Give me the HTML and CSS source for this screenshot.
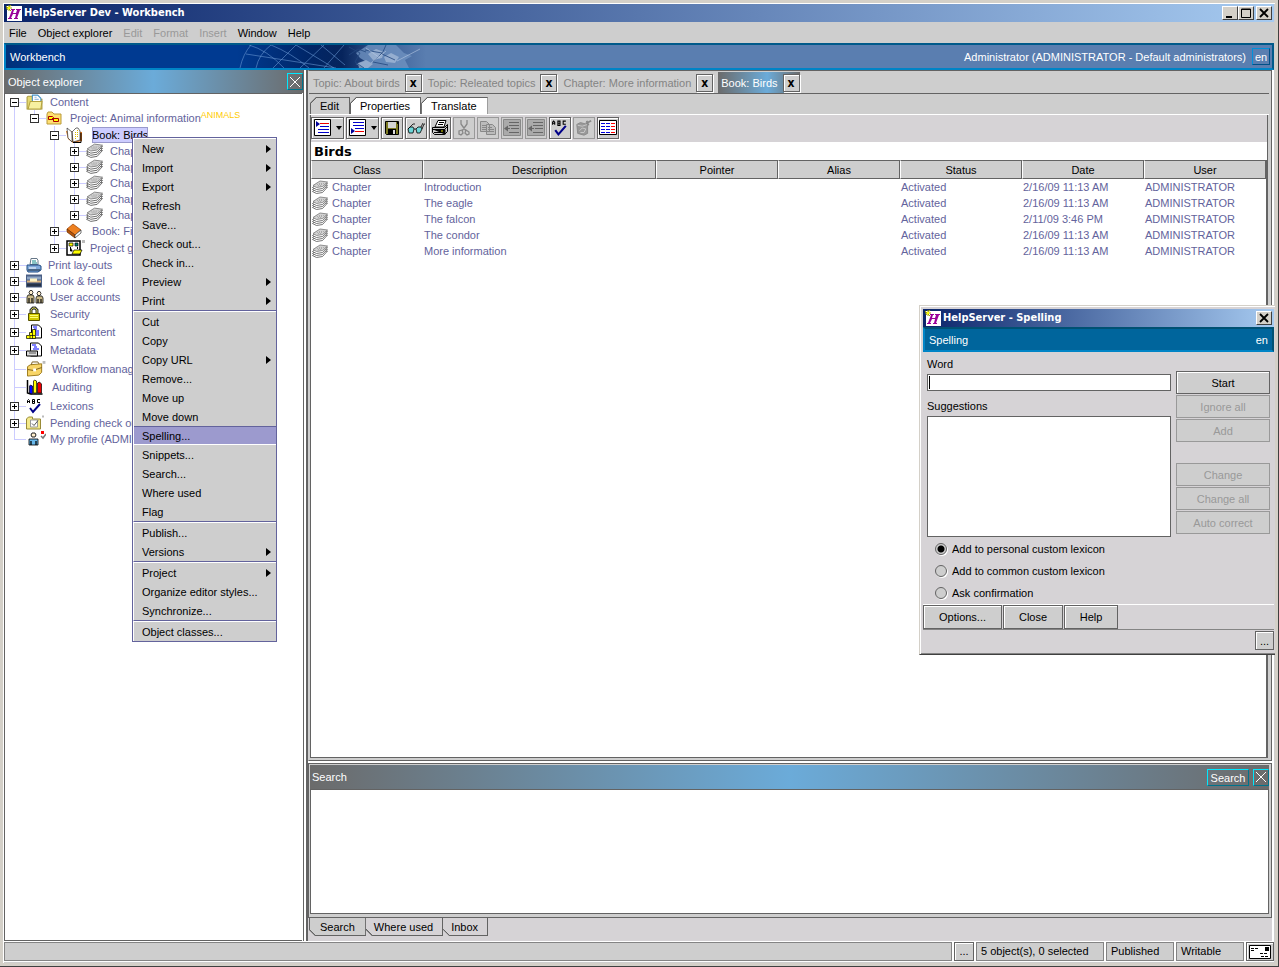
FILE: index.html
```html
<!DOCTYPE html>
<html lang="en">
<head>
<meta charset="utf-8">
<title>HelpServer Dev - Workbench</title>
<link rel="stylesheet" href="styles.css">
</head>
<body>
<svg class="sprite" aria-hidden="true">
  <symbol id="logo" viewBox="0 0 16 16"><path fill="#fff" d="M1 1h15v15H1z"/><path fill="#909" d="M5 4h4v1H8L7 8h3l1-3h-1V4h5v1h-1l-3 8h1v1H8v-1h1l1-4H7l-2 4h1v1H2v-1h1l3-8H5z"/><path stroke="#aa0" d="M0 1l5 5M5 0L1 5M3 0v6M0 3h6"/><path fill="#ff0" d="M2 2h2v2H2z"/></symbol>
  <symbol id="chapter" viewBox="0 0 16 14"><g stroke="#555" stroke-width=".8" fill="#fff"><path d="M.5 11.500l5-4 10-.5-5 5.500-6 1z"/><path d="M.5 9.500l5-4 10-.5-5 5.500-6 1z"/><path d="M.5 7.500l5-4 10-.5-5 5.500-6 1z"/></g><path fill="#d2d2d2" stroke="#777" stroke-width=".8" d="M1 5.500L8 1l7.500 1-5 4.500-6 1z"/><path stroke="#aaa" stroke-dasharray="1 1" d="M5 4.500h6M7 3.500h6M6 5.500h4"/></symbol>
  <symbol id="content" viewBox="0 0 16 15"><path fill="#e4d870" stroke="#aa9b42" d="M1 14V3l1-1h4v3h9v9z"/><path fill="#fff" stroke="#4793c5" d="M6 1h5l3 3v5H6z"/><path stroke="#9bd" d="M8 3h2M8 5h4"/><path fill="#f7f0a0" stroke="#b6a340" d="M2 14l2-7h11l-1 7z"/></symbol>
  <symbol id="project" viewBox="0 0 16 14"><path fill="#ffdf72" stroke="#b99a3a" d="M1 13V3l1-2h4l2 2h7v10z"/><path fill="#ff0" stroke="#a00" d="M2.500 5.500h4l1 1v2h-5zM8.500 7.500h4v3h-5v-3zM6 7.500h3"/></symbol>
  <symbol id="openbook" viewBox="0 0 16 16"><path fill="#d6721d" d="M0 4l2 8 5 4 9-2V5z"/><path fill="#fff" stroke="#333" stroke-width=".7" d="M1 1l5 4v10l-4-4zM6 5l4-4h2l2 3v9l-7 2z"/><path stroke="#db0" stroke-dasharray="1 1" d="M9.500 5v7M11.500 3v8"/><path stroke="#000" fill="none" d="M7 15.500h8V6"/></symbol>
  <symbol id="closedbook" viewBox="0 0 16 16"><path fill="#ee8020" stroke="#963e00" stroke-width=".7" d="M1 6l6-5 8 6-6 5z"/><path fill="#b95509" stroke="#622a00" stroke-width=".7" d="M1 6l8 6v3L1 9z"/><path fill="#fff" stroke="#333" stroke-width=".7" d="M9 12l6-5v3l-6 5z"/></symbol>
  <symbol id="group" viewBox="0 0 19 16"><path fill="#fff" stroke="#000" stroke-width="1.500" d="M1 1h13v14H1z"/><path fill="#ff0" stroke="#000" stroke-width=".7" d="M3 3h4v3H3zM6 14l2-4h8l-2 4z"/><path fill="#087" stroke="#000" stroke-width=".7" d="M9 3h3v3H9z"/><path stroke="#000" d="M4.500 7v4h2M11.500 7v2"/><path fill="#bbb" d="M16 0h3v3h-3z"/></symbol>
  <symbol id="printer" viewBox="0 0 16 15"><path fill="#fff" stroke="#678" d="M4 7l1-6h6l1 2v4z"/><path stroke="#188" d="M6 3.500h4M6 5.500h5"/><path fill="#80a9db" stroke="#214c83" d="M1 7.500h12l2 1v4l-3 2H2l-1-2z"/><path stroke="#123" d="M2 12.500h12"/><path stroke="#fff" d="M3 10.500h7"/></symbol>
  <symbol id="look" viewBox="0 0 16 13"><path fill="#4a5f85" d="M0 0h16v13H0z"/><path fill="#8fa6c4" d="M1 2h14v3H1z"/><path fill="#ddb27b" d="M1 6h14v2H1z"/><path fill="#fff4c5" d="M4 4h7v3H4z"/><path fill="#263246" d="M1 9h14v3H1z"/></symbol>
  <symbol id="users" viewBox="0 0 18 14"><g stroke="#111" stroke-width=".8"><path fill="#fec" d="M4 .5h2l1 2-1 2H4l-1-2zM12 1.500h2l1 2-1 2h-2l-1-2z"/><path fill="#cb8" d="M1 7l1-2h5l1 2v6H6V8v5H3V8v5H1zM10 8l1-2h5l1 2v5h-2V9v4h-3V9v4h-2z"/></g></symbol>
  <symbol id="lock" viewBox="0 0 16 16"><path fill="none" stroke="#333" stroke-width="3" d="M5 8V4l2-2h2l2 2v4"/><path fill="none" stroke="#cc4" d="M5 8V4l2-2h2l2 2v4"/><path fill="#d1c800" stroke="#555000" d="M2.500 7.500h11v7h-11z"/><path stroke="#ffff74" d="M4 9.500h8M4 11.500h8"/></symbol>
  <symbol id="smart" viewBox="0 0 16 15"><path fill="#fff" stroke="#000" d="M5.500.5h7l3 3v10h-10z"/><path stroke="#00f" d="M7 2.500h4M8 4.500h3M9 6.500h4M10 8.500h3M10 10.500h3"/><path fill="#ff0" stroke="#000" stroke-width=".7" d="M.5 11h3V8h3V5h3v9h-9zM4 11v3M6.500 8v6M4 11h5"/></symbol>
  <symbol id="meta" viewBox="0 0 16 15"><path fill="#fff" stroke="#000" d="M4.500 8V.5h8l3 3v10h-11z"/><path stroke="#00f" d="M6 2.500h4M8 4.500h3M7 6.500h6"/><path fill="#ddd" stroke="#000" d="M.5 8.500h11v5H.5z"/><path stroke="#555" d="M3 10.500h7"/></symbol>
  <symbol id="workflow" viewBox="0 0 20 17"><path fill="#f8d568" stroke="#9a7615" d="M1 6l3-2 12-1v9l-3 3-12 1z"/><path fill="none" stroke="#765a18" d="M5 4l1-3h6l1 2M1 9l6 1 9-3"/><path fill="#fff" d="M7 8h3v3H7z"/><path fill="#bbb" d="M17 0h3v3h-3z"/></symbol>
  <symbol id="audit" viewBox="0 0 16 16"><path fill="none" stroke="#000" stroke-width="1.500" d="M1 1v13l3 1h12"/><path fill="#00f" stroke="#000" stroke-width=".7" d="M3 7l1-1 2 1v7l-1 1-2-1z"/><path fill="#ff0" stroke="#000" stroke-width=".7" d="M7 2l1-1 2 1v12H7z"/><path fill="#e00" stroke="#000" stroke-width=".7" d="M11 4l2-1 2 2v9h-4z"/></symbol>
  <symbol id="spell" viewBox="0 0 17 16"><path fill="none" stroke="#000" d="M1.500 5V2.500l1-1 1 1V5M1 3.500h2M6.500 5V1.500h2v4h-2zM6 3.500h2M14 1.500h-2.500v3H14"/><path fill="none" stroke="#008" stroke-width="2" d="M4 10l3 4 7-8"/></symbol>
  <symbol id="pending" viewBox="0 0 18 15"><path fill="#f4e98a" stroke="#998b37" d="M.5 13.500v-10l2-2h4v2h8v10z"/><path fill="#fff" stroke="#999" d="M4.500 4.500h7v7h-7z"/><path fill="none" stroke="#555" d="M6 8l2 2 4-5"/><path fill="#bbb" d="M16 0h2v2h-2z"/></symbol>
  <symbol id="profile" viewBox="0 0 20 15"><path fill="#fec" stroke="#222" d="M6 2h3l1 2-1 2H6L5 4z"/><path fill="#69b8eb" stroke="#000" stroke-width=".8" d="M3 8h9v6h-2v-4 4H5v-4 4H3z"/><path fill="#f00" d="M15 0h3v3h-3z"/><path fill="none" stroke="#777" stroke-width="1.500" d="M15 5l2 2 3-4"/></symbol>
  <symbol id="insert1" viewBox="0 0 18 18"><path fill="#fff" stroke="#000" d="M.5.5h16v16H.5z"/><path fill="#009" d="M2 2l4 3-4 3z"/><path stroke="#e00" d="M6 4.500h9"/><path stroke="#00c" d="M6 7.500h9M4 10.500h11M4 13.500h11"/></symbol>
  <symbol id="insert2" viewBox="0 0 18 18"><path fill="#fff" stroke="#000" d="M.5.5h16v16H.5z"/><path fill="#009" d="M2 9l4 3-4 3z"/><path stroke="#e00" d="M6 12.500h9"/><path stroke="#00c" d="M4 3.500h11M4 6.500h11M6 9.500h9"/></symbol>
  <symbol id="save" viewBox="0 0 18 18"><path fill="#7c7a23" stroke="#000" d="M2.500 2.500h13v13h-12l-1-1z"/><path fill="#d4d4d4" d="M5 3h8v6H5z"/><path fill="#000" d="M5 10h8v6H5zM14 3h1v2h-1z"/><path fill="#ddd" d="M10 11h2v4h-2z"/></symbol>
  <symbol id="glasses" viewBox="0 0 18 18"><path fill="#6ed7da" stroke="#000" stroke-width=".8" d="M1 10l2-2h3l1 2-1 4H2zM9 10l2-2h3l1 2-2 4h-3z"/><path fill="none" stroke="#000" stroke-width=".8" d="M1 10l5-5h2M7 10h2M15 10l2-5h1M14 8l2-4"/></symbol>
  <symbol id="print" viewBox="0 0 18 18"><path fill="#fff" stroke="#000" d="M4 8l3-6.500h8L13 8z"/><path stroke="#000" d="M8 3.500h5M7 5.500h5"/><path fill="#ccc" stroke="#000" d="M1.500 8.500h12l3-3v7l-3 3h-10l-2-2z"/><path stroke="#000" d="M2 10.500h12v5M3 13.500h10M14 10l3-3"/><path stroke="#dd0" d="M10 12h2"/></symbol>
  <symbol id="cut" viewBox="0 0 18 18"><path fill="none" stroke="#888" stroke-width="1.300" d="M6 1v4l5 7M12 1v4l-5 7M7 11l-3 1v3l2 1 2-2zM11 11l3 2v2l-2 1-2-2z"/></symbol>
  <symbol id="copy" viewBox="0 0 18 18"><g fill="#bbb" stroke="#888"><path d="M1.500 2.500h6l3 3v7h-9zM7.500 5.500h6l3 3v7h-9z"/><path d="M3 6.500h4M3 8.500h4M3 10.500h4M9 8.500h4M9 10.500h6M9 12.500h6"/></g></symbol>
  <symbol id="indent" viewBox="0 0 18 18"><path fill="#aaa" stroke="#888" d="M.5.5h17v16H.5z"/><path stroke="#666" d="M6 3.500h10M6 6.500h10M8 9.500h8M2 9.500h5M6 13.500h10"/><path fill="#666" d="M1 9.500l4-3v6z"/></symbol>
  <symbol id="recycle" viewBox="0 0 20 18"><path fill="#999" stroke="#888" d="M2 5l4-2 8 2v10l-4 2-7-2z"/><path stroke="#ccc" fill="none" d="M3 6l5 1 6-2M5 12l3-3 4 1-2 4H6"/><path fill="none" stroke="#888" stroke-width="2" d="M12 4l6-3M13 1l2 5"/></symbol>
  <symbol id="columns" viewBox="0 0 18 18"><path fill="#fff" stroke="#000" d="M.5 1.500h17v14H.5z"/><path stroke="#00d" stroke-dasharray="4 1" d="M2 4.500h9M2 7.500h9M2 10.500h9M2 13.500h9"/><path stroke="#f00" d="M12 4.500h4M12 7.500h4M12 10.500h4M12 13.500h4"/></symbol>
  <symbol id="mail" viewBox="0 0 22 14"><path fill="#fff" stroke="#000" d="M.5.5h21v13H.5z"/><path fill="#000" d="M16 2h4v4h-4z"/><path stroke="#000" stroke-dasharray="3 1" d="M2 3.500h7M2 5.500h4M11 8.500h8M12 11.500h8"/></symbol>
  <symbol id="close" viewBox="0 0 10 10"><path stroke="currentColor" d="M0 0l10 10M10 0L0 10"/></symbol>
  <symbol id="heavyclose" viewBox="0 0 10 10"><path stroke="currentColor" stroke-width="1.800" d="M1 1l8 8M9 1L1 9"/></symbol>
</svg>

<header class="titlebar">
  <svg class="i16"><use href="#logo"/></svg><h1>HelpServer Dev - Workbench</h1>
  <div class="winbtns"><button aria-label="Minimize"><svg class="i10"><path d="M1 8h6v2H1z"/></svg></button><button aria-label="Maximize"><svg class="i10"><path fill="none" stroke="#000" d="M.5 1h9v8.500h-9zM1 1.500h9"/></svg></button><button class="apart" aria-label="Close window"><svg class="i10"><use href="#heavyclose"/></svg></button></div>
</header>
<nav class="menubar"><button>File</button><button>Object explorer</button><button disabled>Edit</button><button disabled>Format</button><button disabled>Insert</button><button>Window</button><button>Help</button></nav>
<div class="banner">
  <svg class="art" viewBox="0 0 420 23" preserveAspectRatio="none" aria-hidden="true">
    <defs><linearGradient id="sea"><stop offset="0" stop-color="#003079"/><stop offset=".1" stop-color="#003a91"/><stop offset=".55" stop-color="#003a91"/><stop offset=".72" stop-color="#002668"/><stop offset=".8" stop-color="#06245c"/><stop offset=".9" stop-color="#3b5e96"/><stop offset="1" stop-color="#5a7eb0"/></linearGradient></defs>
    <path fill="url(#sea)" d="M0 0h420v23H0z"/>
    <path fill="none" stroke="#6694d0" opacity=".6" d="M234 23q3-14 11-23M250 23q3-14 15-23M267 23l23-23M294 23l24-23M318 23l20-23M243 0q18 5 35 23M265 0q20 8 38 23M290 0l38 23M315 0l24 20M240 9l90 14"/>
    <path fill="#6f92c0" opacity=".8" d="M350 8l12-8h28l8 8 8 3-7 4 4 8h-45l-8-4 9-3-5-3z"/>
    <path fill="#b4c7e0" opacity=".6" d="M362 9l8-5 8 3-2 6-9 2zM378 12l7-4 8 4-4 6-9-1zM352 18l8-3 7 4-5 4h-9z"/>
    <path fill="none" stroke="#23477e" opacity=".8" d="M343 2l11 6-5 9 9 6M359 5l17 3-9 9 15 3M380 0l-4 9 13 6M343 10l9-6 8 3"/>
    <path stroke="#b7cae4" opacity=".6" d="M360 3l14 10M365 18l15-12M391 16l23-12"/>
  </svg>
  <span class="name">Workbench</span><span>Administrator (ADMINISTRATOR - Default administrators)</span><button class="lang">en</button>
</div>

<main class="work">
  <section class="explorer">
    <header class="panehead"><h2>Object explorer</h2><button class="cyan" aria-label="Close explorer"><svg class="i10"><use href="#close"/></svg></button></header>
    <ul class="tree">
      <li class="r16"><button class="ex minus first" aria-label="Collapse"></button><svg class="w24"><use href="#content" width="17" height="16"/></svg><a href="#">Content</a></li>
      <li class="r16"><i></i><button class="ex minus last" aria-label="Collapse"></button><svg class="w24"><use href="#project" width="16" height="16"/></svg><a href="#">Project: Animal information</a><sup>ANIMALS</sup></li>
      <li class="r17"><i></i><b></b><button class="ex minus" aria-label="Collapse"></button><svg class="w26"><use href="#openbook" width="16" height="16"/></svg><a href="#" class="sel">Book: Birds</a></li>
      <li class="r16"><i></i><b></b><i></i><button class="ex" aria-label="Expand"></button><svg class="w24"><use href="#chapter" width="17" height="15"/></svg><a href="#">Chapter</a></li>
      <li class="r16"><i></i><b></b><i></i><button class="ex" aria-label="Expand"></button><svg class="w24"><use href="#chapter" width="17" height="15"/></svg><a href="#">Chapter</a></li>
      <li class="r16"><i></i><b></b><i></i><button class="ex" aria-label="Expand"></button><svg class="w24"><use href="#chapter" width="17" height="15"/></svg><a href="#">Chapter</a></li>
      <li class="r16"><i></i><b></b><i></i><button class="ex" aria-label="Expand"></button><svg class="w24"><use href="#chapter" width="17" height="15"/></svg><a href="#">Chapter</a></li>
      <li class="r16"><i></i><b></b><i></i><button class="ex last" aria-label="Expand"></button><svg class="w24"><use href="#chapter" width="17" height="15"/></svg><a href="#">Chapter</a></li>
      <li class="r16"><i></i><b></b><button class="ex" aria-label="Expand"></button><svg class="w26"><use href="#closedbook" width="16" height="16"/></svg><a href="#">Book: Fish</a></li>
      <li class="r17"><i></i><b></b><button class="ex last" aria-label="Expand"></button><svg class="w24"><use href="#group" width="19" height="16"/></svg><a href="#">Project group</a></li>
      <li class="r17"><button class="ex" aria-label="Expand"></button><svg class="w22"><use href="#printer" width="16" height="16"/></svg><a href="#">Print lay-outs</a></li>
      <li class="r16"><button class="ex" aria-label="Expand"></button><svg class="w24"><use href="#look" width="16" height="16"/></svg><a href="#">Look &amp; feel</a></li>
      <li class="r16"><button class="ex" aria-label="Expand"></button><svg class="w24"><use href="#users" width="18" height="16"/></svg><a href="#">User accounts</a></li>
      <li class="r18"><button class="ex" aria-label="Expand"></button><svg class="w24"><use href="#lock" width="16" height="16"/></svg><a href="#">Security</a></li>
      <li class="r18"><button class="ex" aria-label="Expand"></button><svg class="w24"><use href="#smart" width="16" height="16"/></svg><a href="#">Smartcontent</a></li>
      <li class="r18"><button class="ex" aria-label="Expand"></button><svg class="w24"><use href="#meta" width="16" height="16"/></svg><a href="#">Metadata</a></li>
      <li class="r19"><span class="leaf"></span><svg class="w26"><use href="#workflow" width="20" height="16"/></svg><a href="#">Workflow management</a></li>
      <li class="r18"><span class="leaf"></span><svg class="w26"><use href="#audit" width="17" height="16"/></svg><a href="#">Auditing</a></li>
      <li class="r19"><button class="ex" aria-label="Expand"></button><svg class="w24"><use href="#spell" width="17" height="16"/></svg><a href="#">Lexicons</a></li>
      <li class="r16"><button class="ex" aria-label="Expand"></button><svg class="w24"><use href="#pending" width="18" height="16"/></svg><a href="#">Pending check outs</a></li>
      <li class="r16"><span class="leaf last"></span><svg class="w24"><use href="#profile" width="20" height="15"/></svg><a href="#">My profile (ADMINISTRATOR)</a></li>
    </ul>
  </section>

  <div class="right">
    <section class="editor">
      <div class="doctabs">
        <span class="doc"><a href="#">Topic: About birds</a><button aria-label="Close tab">x</button></span>
        <span class="doc"><a href="#">Topic: Releated topics</a><button aria-label="Close tab">x</button></span>
        <span class="doc"><a href="#">Chapter: More information</a><button aria-label="Close tab">x</button></span>
        <span class="doc active"><a href="#">Book: Birds</a><button aria-label="Close tab">x</button></span>
      </div>
      <div class="subtabs"><button class="on">Edit</button><button>Properties</button><button>Translate</button></div>
      <div class="page">
        <div class="toolbar">
          <button class="drop" aria-label="Insert before"><svg class="i18"><use href="#insert1"/></svg></button>
          <button class="drop" aria-label="Insert after"><svg class="i18"><use href="#insert2"/></svg></button>
          <button aria-label="Save"><svg class="i18"><use href="#save"/></svg></button>
          <button aria-label="Preview"><svg class="i18"><use href="#glasses"/></svg></button>
          <button aria-label="Print"><svg class="i18"><use href="#print"/></svg></button>
          <button disabled aria-label="Cut"><svg class="i18"><use href="#cut"/></svg></button>
          <button disabled aria-label="Copy"><svg class="i18"><use href="#copy"/></svg></button>
          <button disabled aria-label="Move up"><svg class="i18"><use href="#indent"/></svg></button>
          <button disabled aria-label="Move down"><svg class="i18"><use href="#indent"/></svg></button>
          <button aria-label="Spelling"><svg class="i18"><use href="#spell"/></svg></button>
          <button disabled aria-label="Remove"><svg class="i18"><use href="#recycle"/></svg></button>
          <button aria-label="Columns"><svg class="i18"><use href="#columns"/></svg></button>
        </div>
        <h2 class="doctitle">Birds</h2>
        <div class="tablewrap">
        <table>
          <colgroup><col class="c1"><col><col class="c3"><col class="c3"><col class="c3"><col class="c3"><col class="c3"></colgroup>
          <thead><tr><th>Class</th><th>Description</th><th>Pointer</th><th>Alias</th><th>Status</th><th>Date</th><th>User</th></tr></thead>
          <tbody>
            <tr><td class="cls"><svg class="i16"><use href="#chapter"/></svg>Chapter</td><td>Introduction</td><td></td><td></td><td>Activated</td><td>2/16/09 11:13 AM</td><td>ADMINISTRATOR</td></tr>
            <tr><td class="cls"><svg class="i16"><use href="#chapter"/></svg>Chapter</td><td>The eagle</td><td></td><td></td><td>Activated</td><td>2/16/09 11:13 AM</td><td>ADMINISTRATOR</td></tr>
            <tr><td class="cls"><svg class="i16"><use href="#chapter"/></svg>Chapter</td><td>The falcon</td><td></td><td></td><td>Activated</td><td>2/11/09 3:46 PM</td><td>ADMINISTRATOR</td></tr>
            <tr><td class="cls"><svg class="i16"><use href="#chapter"/></svg>Chapter</td><td>The condor</td><td></td><td></td><td>Activated</td><td>2/16/09 11:13 AM</td><td>ADMINISTRATOR</td></tr>
            <tr><td class="cls"><svg class="i16"><use href="#chapter"/></svg>Chapter</td><td>More information</td><td></td><td></td><td>Activated</td><td>2/16/09 11:13 AM</td><td>ADMINISTRATOR</td></tr>
          </tbody>
        </table>
        </div>
      </div>
    </section>
    <section class="searchpane">
      <div class="searchbox">
        <header class="panehead"><h2>Search</h2><button class="cyan text">Search</button><button class="cyan" aria-label="Close search"><svg class="i10"><use href="#close"/></svg></button></header>
        <div class="results"></div>
      </div>
      <div class="bottabs"><button class="on">Search</button><button>Where used</button><button>Inbox</button></div>
    </section>
  </div>
</main>

<footer class="status"><span class="fill"></span><button>...</button><span class="s1">5 object(s), 0 selected</span><span class="s2">Published</span><span class="s2">Writable</span><button class="mailbtn" aria-label="Messages"><svg class="i22"><use href="#mail"/></svg></button></footer>

<div class="context" role="menu">
  <div class="grp"><button class="sub">New</button><button class="sub">Import</button><button class="sub">Export</button><button>Refresh</button><button>Save...</button><button>Check out...</button><button>Check in...</button><button class="sub">Preview</button><button class="sub">Print</button></div>
  <div class="grp"><button>Cut</button><button>Copy</button><button class="sub">Copy URL</button><button>Remove...</button><button>Move up</button><button>Move down</button><button class="hot">Spelling...</button><button>Snippets...</button><button>Search...</button><button>Where used</button><button>Flag</button></div>
  <div class="grp"><button>Publish...</button><button class="sub">Versions</button></div>
  <div class="grp"><button class="sub">Project</button><button>Organize editor styles...</button><button>Synchronize...</button></div>
  <div class="grp"><button>Object classes...</button></div>
</div>

<div class="dialog" role="dialog" aria-labelledby="dlg">
  <header class="titlebar"><svg class="i16"><use href="#logo"/></svg><h2 id="dlg">HelpServer - Spelling</h2><div class="winbtns"><button aria-label="Close dialog"><svg class="i10"><use href="#heavyclose"/></svg></button></div></header>
  <div class="subbanner"><span>Spelling</span><span>en</span></div>
  <div class="form">
    <div class="fields">
      <label for="word">Word</label><input id="word" type="text" class="word">
      <label for="sugg">Suggestions</label><select id="sugg" size="5"></select>
    </div>
    <div class="actions"><button>Start</button><button disabled>Ignore all</button><button disabled>Add</button><button class="gap" disabled>Change</button><button disabled>Change all</button><button disabled>Auto correct</button></div>
  </div>
  <div class="radios"><label><input type="radio" name="lex" checked>Add to personal custom lexicon</label><label><input type="radio" name="lex">Add to common custom lexicon</label><label><input type="radio" name="lex">Ask confirmation</label></div>
  <div class="dlgbtns"><button class="opt">Options...</button><button class="cl">Close</button><button>Help</button></div>
  <div class="dlgstatus"><button>...</button></div>
</div>
</body>
</html>
```
FILE: styles.css
```css
*, *::before, *::after { box-sizing: border-box; }
html { height: 100%; }
body { margin: 0; min-height: 100%; display: flex; flex-direction: column; background: #cecece; border: 3px solid #d4d0c8; box-shadow: inset 1px 1px #fff; padding: 1px; font: 11px/16px "Liberation Sans", Arial, sans-serif; color: #000; position: relative; }
html { border-right: 1px solid #404040; border-bottom: 1px solid #404040; }
button, input, select { font: inherit; color: inherit; margin: 0; padding: 0; border-radius: 0; }
button { border: 0; background: none; white-space: nowrap; }
h1, h2, ul { margin: 0; padding: 0; font-size: inherit; font-weight: inherit; }
a { color: inherit; text-decoration: none; }
svg { flex: none; display: block; }
.sprite { position: absolute; width: 0; height: 0; }
.i10 { width: 10px; height: 10px; }
.i16 { width: 16px; height: 16px; }
.i18 { width: 18px; height: 18px; }
.i22 { width: 22px; height: 14px; }

.titlebar { display: flex; align-items: center; height: 18px; padding: 0 2px; background: linear-gradient(90deg, #0a246a, #a6caf0); color: #fff; font: bold 11px/18px "DejaVu Sans Condensed", "DejaVu Sans", sans-serif; }
.titlebar h1, .titlebar h2 { flex: 1; padding-left: 2px; }
.winbtns { display: flex; }
.winbtns button { width: 16px; height: 14px; display: grid; place-items: center; color: #000; background: #d4d0c8; border: 1px solid; border-color: #fff #404040 #404040 #fff; }
.winbtns .apart { margin-left: 2px; }
.menubar { display: flex; gap: 11px; height: 21px; padding: 0 5px; }
.menubar button:disabled { color: #999; }
.banner { position: relative; display: flex; align-items: center; height: 27px; padding: 0 2px 0 4px; color: #fff; background: #5a7eb0; border: 2px solid #0084c6; border-top-color: #005a8a; border-right-color: #005a8a; }
.banner span { position: relative; }
.banner .name { flex: 1; }
.art { position: absolute; left: 0; top: 0; width: 420px; height: 100%; }
.lang { margin-left: 6px; width: 18px; height: 17px; border: 1px solid; border-color: #0091da #005088 #005088 #0091da; }

.work { flex: 1; display: grid; grid-template-columns: 300px 1fr; gap: 2px; background: #fff; }
.explorer { display: flex; flex-direction: column; min-width: 0; border-right: 1px solid #636363; }
.panehead { display: flex; align-items: center; flex: none; height: 24px; padding: 0 0 0 2px; color: #fff; background: linear-gradient(90deg, #6b6b6b, #6babd9 50%, #6b6b6b); }
.explorer .panehead { height: 23px; padding-left: 4px; }
.panehead h2 { flex: 1; }
.cyan { width: 16px; height: 17px; display: grid; place-items: center; border: 1px solid; border-color: #00e8ff #00738c #00738c #00e8ff; }
.cyan.text { width: 42px; margin-right: 4px; }
.tree { flex: 1; list-style: none; background: #fff; border: 1px solid #636363; border-right: 0; overflow: hidden; color: #63639c; margin-right: 1px; padding-left: 1px; }
.tree li { display: flex; white-space: nowrap; align-items: center; }
.r16 { height: 16px; } .r17 { height: 17px; } .r18 { height: 18px; } .r19 { height: 19px; }
.tree svg { height: 16px; overflow: visible; }
.w22 { width: 22px; } .w24 { width: 24px; } .w26 { width: 26px; }
.tree i, .tree b { flex: none; width: 20px; height: 100%; }
.tree i, .ex, .leaf { background: linear-gradient(#ccf, #ccf) 8px 0 / 1px 100% no-repeat; }
.ex, .leaf { position: relative; flex: none; width: 20px; height: 100%; }
.tree .last { background-size: 1px 50%; }
.tree .first { background-position: 8px 8px; }
.ex::before { content: ""; position: absolute; left: 4px; top: calc(50% - 4px); width: 9px; height: 9px; border: 1px solid #333; background: linear-gradient(#000, #000) 1px 3px / 5px 1px no-repeat, linear-gradient(#000, #000) 3px 1px / 1px 5px no-repeat, #fff; }
.ex.minus::before { background: linear-gradient(#000, #000) 1px 3px / 5px 1px no-repeat, #fff; }
.ex::after, .leaf::after { content: ""; position: absolute; left: 13px; right: 0; top: 50%; height: 1px; background: #ccf; }
.leaf::after { left: 8px; }
.tree .sel { color: #000; background: #ccf; outline: 1px solid #99c; outline-offset: -1px; }
.tree sup { font-size: 9px; line-height: 9px; padding-top: 1px; color: #fc0; align-self: flex-start; }

.right { display: flex; flex-direction: column; gap: 2px; min-width: 0; border-left: 2px solid #636363; padding-right: 2px; }
.editor { flex: 1; display: flex; flex-direction: column; background: #cecece; border: 1px solid #636363; border-left-color: #cecece; padding-right: 2px; }
.doctabs { display: flex; height: 23px; padding: 1px 0 0 3px; border-bottom: 1px solid #636363; color: #848484; }
.doc { display: flex; align-items: center; gap: 5px; margin-right: 5px; padding-left: 1px; height: 21px; }
.doc button { width: 17px; height: 18px; border: 1px solid #636363; background: #cecece; box-shadow: inset 1px 1px #fff, 1px 1px #fff; color: #000; font: bold 12px/14px "DejaVu Sans Condensed", "DejaVu Sans", sans-serif; }
.doc.active { color: #fff; padding-left: 3px; background: linear-gradient(90deg, #6b6b6b, #6babd9 60%, #6b6b6b); }
.subtabs { display: flex; align-items: flex-end; height: 21px; padding: 0 1px; border-bottom: 1px solid #fff; }
.subtabs button { height: 17px; padding: 0 10px 0 9px; background: linear-gradient(135deg, transparent 4px, #636363 4px 5px, transparent 5px), #fff; background-origin: border-box; border: 1px solid #636363; border-width: 1px 1px 0; clip-path: polygon(6px 0, 100% 0, 100% 100%, 0 100%, 0 6px); }
.subtabs .on { background-color: #cecece; }
.page { flex: 1; display: flex; flex-direction: column; background: #fff; border: 1px solid #636363; border-top: 0; margin: 0 1px 2px; }
.toolbar { display: flex; gap: 2px; height: 27px; padding: 2px 0; background: #d6d3d6; }
.toolbar button { width: 22px; height: 22px; display: flex; align-items: center; justify-content: center; background: #cecece; border: 1px solid #636363; box-shadow: inset 1px 1px #fff, 1px 1px #fff; }
.toolbar button:disabled { border-color: #999; box-shadow: none; }
.toolbar .drop { width: 33px; gap: 4px; }
.drop::after { content: ""; border: 3px solid transparent; border-top: 4px solid #000; border-bottom: 0; }
.doctitle { padding: 2px 3px 0; font: bold 13px/16px "DejaVu Sans", sans-serif; }
.tablewrap { flex: 1; border-right: 1px solid #636363; }
table { width: 100%; table-layout: fixed; border-collapse: separate; border-spacing: 0; color: #63639c; }
.c1 { width: 112px; } .c3 { width: 122px; }
th { height: 19px; padding: 0; font-weight: normal; color: #000; background: #cecece; border: 1px solid; border-color: #636363 #636363 #636363 #fff; }
td { height: 16px; padding: 0 1px; line-height: 16px; white-space: nowrap; }
.cls { display: flex; gap: 4px; }

.searchpane { display: flex; flex-direction: column; background: #d6d3d6; }
.searchbox { padding: 1px 2px 3px 1px; border: 1px solid #636363; background: #cecece; }
.results { height: 125px; background: #fff; border: 1px solid #636363; }
.bottabs { display: flex; height: 23px; padding: 0 1px; }
.bottabs button { height: 18px; padding: 0 9px 0 8px; border: 1px solid #636363; border-top: 0; background: linear-gradient(45deg, transparent 4px, #636363 4px 5px, transparent 5px); background-origin: border-box; clip-path: polygon(0 0, 100% 0, 100% 100%, 6px 100%, 0 12px); }
.bottabs button + button { border-left: 0; }
.bottabs .on { background-color: #cecece; padding: 0 10px; }

.status { display: flex; gap: 2px; height: 21px; padding-top: 1px; background: #fff; }
.status > * { background: #cecece; border: 1px solid #848484; height: 19px; padding: 0 4px; line-height: 17px; white-space: nowrap; }
.status .fill { flex: 1; }
.status button { width: 20px; padding: 0; border-color: #636363; box-shadow: inset 1px 1px #fff; }
.status .s1 { width: 128px; } .status .s2 { width: 68px; }
.status .mailbtn { width: 28px; display: grid; place-items: center; }

.context { position: absolute; left: 129px; top: 134px; width: 145px; border: 1px solid #63639c; background: #cecece; }
.grp { padding-top: 1px; border-left: 1px solid #fff; }
.grp:first-child { border-top: 1px solid #fff; padding: 0; }
.grp + .grp { border-top: 1px solid #63639c; box-shadow: inset 0 1px #fff; }
.grp button { display: flex; align-items: center; width: 100%; height: 19px; padding: 0 5px 0 8px; }
.grp .hot { background: #9c9ace; border-top: 1px solid #63639c; border-bottom: 1px solid #fff; }
.sub::after { content: ""; margin-left: auto; border: 4px solid transparent; border-left: 5px solid #000; border-right: 0; }

.dialog { position: absolute; right: -2px; top: 302px; width: 358px; background: #d6d3d6; border: 1px solid #d4d0c8; border-right-color: #404040; border-bottom-color: #404040; box-shadow: inset 1px 1px #fff, inset -1px -1px #848484; padding: 3px 2px 2px 3px; }
.subbanner { display: flex; justify-content: space-between; height: 25px; padding: 3px 4px; color: #fff; background: #00659c; border: 2px solid #0084c6; border-top-color: #005173; border-right-color: #005173; }
.form { display: grid; grid-template-columns: 1fr 94px; gap: 5px; padding: 4px 4px 0; }
.fields { display: flex; flex-direction: column; }
.fields label { height: 18px; }
.fields input { height: 17px; margin-bottom: 7px; padding: 0 2px; outline: 0; border: 1px solid #636363; }
.fields .word { background: linear-gradient(#000, #000) 1px 1px / 1px 13px no-repeat, #fff; }
.fields select { height: 121px; overflow: hidden; outline: 0; border: 1px solid #636363; background: #fff; }
.actions { display: flex; flex-direction: column; gap: 1px; padding-top: 15px; }
.actions button, .dlgbtns button, .dlgstatus button { height: 23px; background: #cecece; border: 1px solid #636363; box-shadow: inset 1px 1px #fff; }
.actions button:disabled { color: #999; border-color: #999; box-shadow: none; }
.actions .gap { margin-top: 20px; }
.radios { display: flex; flex-direction: column; padding: 1px 12px 0; }
.radios label { display: flex; align-items: center; gap: 5px; height: 22px; }
.radios input { appearance: none; width: 12px; height: 12px; border: 1px solid #636363; border-radius: 50%; background: #cecece; box-shadow: 1px 1px #fff; }
.radios input:checked { background: radial-gradient(circle, #000 3px, #cecece 4px); }
.dlgbtns { display: flex; gap: 1px; height: 26px; border-top: 1px solid #fff; border-bottom: 1px solid #848484; }
.dlgbtns button { width: 54px; height: 24px; }
.dlgbtns .opt { width: 79px; } .dlgbtns .cl { width: 60px; }
.dlgstatus { display: flex; justify-content: flex-end; height: 22px; padding-top: 1px; }
.dlgstatus button { width: 19px; height: 19px; }
```
